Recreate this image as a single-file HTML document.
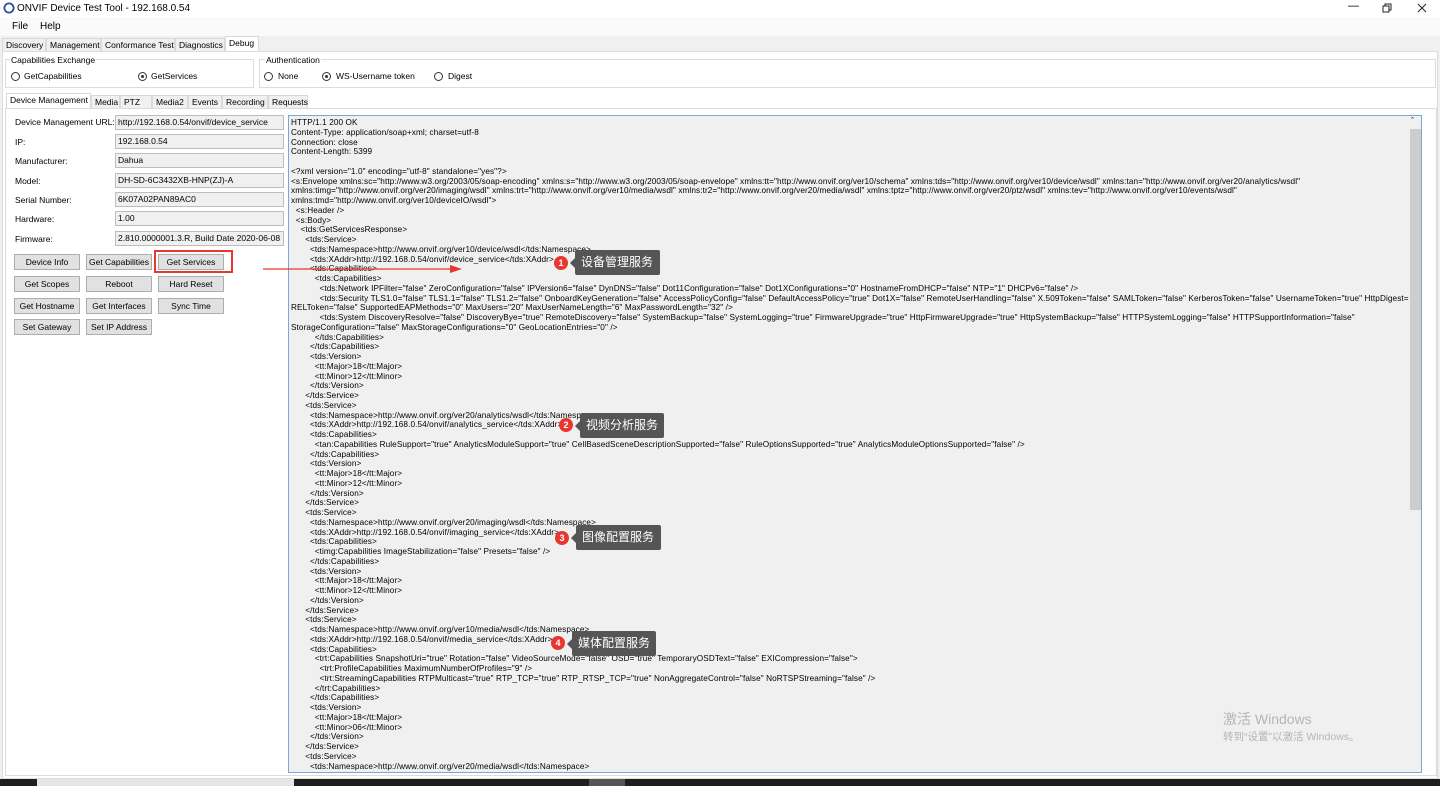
<!DOCTYPE html>
<html><head><meta charset="utf-8"><style>
*{margin:0;padding:0;box-sizing:border-box}
body{width:1440px;height:786px;overflow:hidden;background:#f0f0f0;font-family:"Liberation Sans","Noto Sans CJK SC",sans-serif;font-size:9px;color:#000;position:relative}
.a{position:absolute}
.title{left:0;top:0;width:1440px;height:17px;background:#fff}
.menu{left:0;top:17px;width:1440px;height:19px;background:#fafafa}
.tab{position:absolute;top:38px;height:13px;border:1px solid #d9d9d9;border-bottom:none;background:#f0f0f0;font-size:8.5px;line-height:12px;padding-left:3px;white-space:nowrap}
.grp{position:absolute;border:1px solid #dcdcdc;background:#fff}
.lbl{position:absolute;font-size:8.5px;white-space:nowrap}
.radio{position:absolute;width:9px;height:9px;border:1px solid #333;border-radius:50%;background:#fff}
.radio.on::after{content:"";position:absolute;left:2px;top:2px;width:3px;height:3px;border-radius:50%;background:#333}
.fld{position:absolute;left:115px;width:169px;height:15px;border:1px solid #bdbdbd;background:#f0f0f0;font-size:8.5px;line-height:13px;padding-left:2px;white-space:nowrap;overflow:hidden}
.btn{position:absolute;width:66px;height:16px;border:1px solid #adadad;background:#e1e1e1;font-size:8.5px;line-height:14px;text-align:center;white-space:nowrap}
#txt{left:288px;top:115px;width:1134px;height:658px;border:1px solid #7aa7d8;background:#f0f0f0;overflow:hidden;padding-top:2px}
#txt div{height:9.75px;line-height:9.75px;font-size:8.2px;white-space:pre;letter-spacing:0.1px;padding-left:2px}
.co{position:absolute;height:25px;background:#555;color:#fff;font-size:12px;line-height:25px;padding-left:6px;border-radius:2px}
.co::before{content:"";position:absolute;left:-5px;top:8px;border-right:5px solid #555;border-top:5px solid transparent;border-bottom:5px solid transparent}
.num{position:absolute;width:14px;height:14px;border-radius:50%;background:#e8372f;color:#fff;font-size:9px;line-height:14px;text-align:center;font-weight:bold}
</style></head><body>
<div class="a title"></div>
<svg class="a" style="left:3px;top:2px" width="12" height="12"><circle cx="6" cy="6" r="4.6" fill="none" stroke="#2b4d9c" stroke-width="1.8"/></svg>
<div class="lbl" style="left:17px;top:3px;font-size:10px">ONVIF Device Test Tool - 192.168.0.54</div>
<div class="lbl" style="left:1348px;top:0px;font-size:11px">—</div>
<svg class="a" style="left:1382px;top:3px" width="10" height="10"><rect x="1" y="3" width="6" height="6" fill="none" stroke="#222"/><path d="M3 3V1h6v6H7" fill="none" stroke="#222"/></svg>
<svg class="a" style="left:1417px;top:3px" width="10" height="10"><path d="M1 1L9 9M9 1L1 9" stroke="#222"/></svg>
<div class="a menu"></div>
<div class="lbl" style="left:12px;top:21px;font-size:10px">File</div>
<div class="lbl" style="left:40px;top:21px;font-size:10px">Help</div>

<div class="tab" style="left:2px;width:44px">Discovery</div>
<div class="tab" style="left:46px;width:55px">Management</div>
<div class="tab" style="left:101px;width:74px">Conformance Test</div>
<div class="tab" style="left:175px;width:50px">Diagnostics</div>
<div class="tab" style="left:225px;width:34px;top:36px;height:15px;background:#fff">Debug</div>
<div class="a" style="left:2px;top:51px;width:1436px;height:728px;background:#fff;border:1px solid #dcdcdc"></div>

<div class="grp" style="left:5px;top:59px;width:249px;height:29px"></div>
<div class="lbl" style="left:10px;top:55px;background:#fff;padding:0 1px">Capabilities Exchange</div>
<div class="radio" style="left:11px;top:72px"></div><div class="lbl" style="left:24px;top:71px">GetCapabilities</div>
<div class="radio on" style="left:138px;top:72px"></div><div class="lbl" style="left:151px;top:71px">GetServices</div>
<div class="grp" style="left:259px;top:59px;width:1177px;height:29px"></div>
<div class="lbl" style="left:265px;top:55px;background:#fff;padding:0 1px">Authentication</div>
<div class="radio" style="left:264px;top:72px"></div><div class="lbl" style="left:278px;top:71px">None</div>
<div class="radio on" style="left:322px;top:72px"></div><div class="lbl" style="left:336px;top:71px">WS-Username token</div>
<div class="radio" style="left:434px;top:72px"></div><div class="lbl" style="left:448px;top:71px">Digest</div>

<div class="tab" style="left:6px;top:93px;width:85px;height:16px;background:#fff">Device Management</div>
<div class="tab" style="left:91px;top:95px;width:29px">Media</div>
<div class="tab" style="left:120px;top:95px;width:32px">PTZ</div>
<div class="tab" style="left:152px;top:95px;width:36px">Media2</div>
<div class="tab" style="left:188px;top:95px;width:34px">Events</div>
<div class="tab" style="left:222px;top:95px;width:46px">Recording</div>
<div class="tab" style="left:268px;top:95px;width:40px">Requests</div>
<div class="a" style="left:5px;top:108px;width:1432px;height:668px;border:1px solid #dcdcdc;background:#fff"></div>

<div class="lbl" style="left:15px;top:117px">Device Management URL:</div><div class="fld" style="top:115px">http://192.168.0.54/onvif/device_service</div>
<div class="lbl" style="left:15px;top:137px">IP:</div><div class="fld" style="top:134px">192.168.0.54</div>
<div class="lbl" style="left:15px;top:156px">Manufacturer:</div><div class="fld" style="top:153px">Dahua</div>
<div class="lbl" style="left:15px;top:176px">Model:</div><div class="fld" style="top:173px">DH-SD-6C3432XB-HNP(ZJ)-A</div>
<div class="lbl" style="left:15px;top:195px">Serial Number:</div><div class="fld" style="top:192px">6K07A02PAN89AC0</div>
<div class="lbl" style="left:15px;top:214px">Hardware:</div><div class="fld" style="top:211px">1.00</div>
<div class="lbl" style="left:15px;top:234px">Firmware:</div><div class="fld" style="top:231px">2.810.0000001.3.R, Build Date 2020-06-08</div>

<div class="btn" style="left:14px;top:254px">Device Info</div>
<div class="btn" style="left:86px;top:254px">Get Capabilities</div>
<div class="btn" style="left:158px;top:254px">Get Services</div>
<div class="btn" style="left:14px;top:276px">Get Scopes</div>
<div class="btn" style="left:86px;top:276px">Reboot</div>
<div class="btn" style="left:158px;top:276px">Hard Reset</div>
<div class="btn" style="left:14px;top:298px">Get Hostname</div>
<div class="btn" style="left:86px;top:298px">Get Interfaces</div>
<div class="btn" style="left:158px;top:298px">Sync Time</div>
<div class="btn" style="left:14px;top:319px">Set Gateway</div>
<div class="btn" style="left:86px;top:319px">Set IP Address</div>
<div class="a" style="left:154px;top:250px;width:79px;height:23px;border:2px solid #e8372f"></div>

<div id="txt" class="a">
<div>HTTP/1.1 200 OK</div>
<div>Content-Type: application/soap+xml; charset=utf-8</div>
<div>Connection: close</div>
<div>Content-Length: 5399</div>
<div> </div>
<div>&lt;?xml version="1.0" encoding="utf-8" standalone="yes"?&gt;</div>
<div>&lt;s:Envelope xmlns:sc="http://www.w3.org/2003/05/soap-encoding" xmlns:s="http://www.w3.org/2003/05/soap-envelope" xmlns:tt="http://www.onvif.org/ver10/schema" xmlns:tds="http://www.onvif.org/ver10/device/wsdl" xmlns:tan="http://www.onvif.org/ver20/analytics/wsdl"</div>
<div>xmlns:timg="http://www.onvif.org/ver20/imaging/wsdl" xmlns:trt="http://www.onvif.org/ver10/media/wsdl" xmlns:tr2="http://www.onvif.org/ver20/media/wsdl" xmlns:tptz="http://www.onvif.org/ver20/ptz/wsdl" xmlns:tev="http://www.onvif.org/ver10/events/wsdl"</div>
<div>xmlns:tmd="http://www.onvif.org/ver10/deviceIO/wsdl"&gt;</div>
<div>  &lt;s:Header /&gt;</div>
<div>  &lt;s:Body&gt;</div>
<div>    &lt;tds:GetServicesResponse&gt;</div>
<div>      &lt;tds:Service&gt;</div>
<div>        &lt;tds:Namespace&gt;http://www.onvif.org/ver10/device/wsdl&lt;/tds:Namespace&gt;</div>
<div>        &lt;tds:XAddr&gt;http://192.168.0.54/onvif/device_service&lt;/tds:XAddr&gt;</div>
<div>        &lt;tds:Capabilities&gt;</div>
<div>          &lt;tds:Capabilities&gt;</div>
<div>            &lt;tds:Network IPFilter="false" ZeroConfiguration="false" IPVersion6="false" DynDNS="false" Dot11Configuration="false" Dot1XConfigurations="0" HostnameFromDHCP="false" NTP="1" DHCPv6="false" /&gt;</div>
<div>            &lt;tds:Security TLS1.0="false" TLS1.1="false" TLS1.2="false" OnboardKeyGeneration="false" AccessPolicyConfig="false" DefaultAccessPolicy="true" Dot1X="false" RemoteUserHandling="false" X.509Token="false" SAMLToken="false" KerberosToken="false" UsernameToken="true" HttpDigest="true"</div>
<div>RELToken="false" SupportedEAPMethods="0" MaxUsers="20" MaxUserNameLength="6" MaxPasswordLength="32" /&gt;</div>
<div>            &lt;tds:System DiscoveryResolve="false" DiscoveryBye="true" RemoteDiscovery="false" SystemBackup="false" SystemLogging="true" FirmwareUpgrade="true" HttpFirmwareUpgrade="true" HttpSystemBackup="false" HTTPSystemLogging="false" HTTPSupportInformation="false"</div>
<div>StorageConfiguration="false" MaxStorageConfigurations="0" GeoLocationEntries="0" /&gt;</div>
<div>          &lt;/tds:Capabilities&gt;</div>
<div>        &lt;/tds:Capabilities&gt;</div>
<div>        &lt;tds:Version&gt;</div>
<div>          &lt;tt:Major&gt;18&lt;/tt:Major&gt;</div>
<div>          &lt;tt:Minor&gt;12&lt;/tt:Minor&gt;</div>
<div>        &lt;/tds:Version&gt;</div>
<div>      &lt;/tds:Service&gt;</div>
<div>      &lt;tds:Service&gt;</div>
<div>        &lt;tds:Namespace&gt;http://www.onvif.org/ver20/analytics/wsdl&lt;/tds:Namespace&gt;</div>
<div>        &lt;tds:XAddr&gt;http://192.168.0.54/onvif/analytics_service&lt;/tds:XAddr&gt;</div>
<div>        &lt;tds:Capabilities&gt;</div>
<div>          &lt;tan:Capabilities RuleSupport="true" AnalyticsModuleSupport="true" CellBasedSceneDescriptionSupported="false" RuleOptionsSupported="true" AnalyticsModuleOptionsSupported="false" /&gt;</div>
<div>        &lt;/tds:Capabilities&gt;</div>
<div>        &lt;tds:Version&gt;</div>
<div>          &lt;tt:Major&gt;18&lt;/tt:Major&gt;</div>
<div>          &lt;tt:Minor&gt;12&lt;/tt:Minor&gt;</div>
<div>        &lt;/tds:Version&gt;</div>
<div>      &lt;/tds:Service&gt;</div>
<div>      &lt;tds:Service&gt;</div>
<div>        &lt;tds:Namespace&gt;http://www.onvif.org/ver20/imaging/wsdl&lt;/tds:Namespace&gt;</div>
<div>        &lt;tds:XAddr&gt;http://192.168.0.54/onvif/imaging_service&lt;/tds:XAddr&gt;</div>
<div>        &lt;tds:Capabilities&gt;</div>
<div>          &lt;timg:Capabilities ImageStabilization="false" Presets="false" /&gt;</div>
<div>        &lt;/tds:Capabilities&gt;</div>
<div>        &lt;tds:Version&gt;</div>
<div>          &lt;tt:Major&gt;18&lt;/tt:Major&gt;</div>
<div>          &lt;tt:Minor&gt;12&lt;/tt:Minor&gt;</div>
<div>        &lt;/tds:Version&gt;</div>
<div>      &lt;/tds:Service&gt;</div>
<div>      &lt;tds:Service&gt;</div>
<div>        &lt;tds:Namespace&gt;http://www.onvif.org/ver10/media/wsdl&lt;/tds:Namespace&gt;</div>
<div>        &lt;tds:XAddr&gt;http://192.168.0.54/onvif/media_service&lt;/tds:XAddr&gt;</div>
<div>        &lt;tds:Capabilities&gt;</div>
<div>          &lt;trt:Capabilities SnapshotUri="true" Rotation="false" VideoSourceMode="false" OSD="true" TemporaryOSDText="false" EXICompression="false"&gt;</div>
<div>            &lt;trt:ProfileCapabilities MaximumNumberOfProfiles="9" /&gt;</div>
<div>            &lt;trt:StreamingCapabilities RTPMulticast="true" RTP_TCP="true" RTP_RTSP_TCP="true" NonAggregateControl="false" NoRTSPStreaming="false" /&gt;</div>
<div>          &lt;/trt:Capabilities&gt;</div>
<div>        &lt;/tds:Capabilities&gt;</div>
<div>        &lt;tds:Version&gt;</div>
<div>          &lt;tt:Major&gt;18&lt;/tt:Major&gt;</div>
<div>          &lt;tt:Minor&gt;06&lt;/tt:Minor&gt;</div>
<div>        &lt;/tds:Version&gt;</div>
<div>      &lt;/tds:Service&gt;</div>
<div>      &lt;tds:Service&gt;</div>
<div>        &lt;tds:Namespace&gt;http://www.onvif.org/ver20/media/wsdl&lt;/tds:Namespace&gt;</div>
</div>
<div class="a" style="left:1409px;top:116px;width:12px;height:656px;background:#f0f0f0"></div>
<div class="lbl" style="left:1411px;top:116px;font-size:9px">&#710;</div>
<div class="a" style="left:1410px;top:129px;width:11px;height:381px;background:#cdcdcd"></div>

<svg class="a" style="left:262px;top:263px" width="202" height="12"><path d="M1 6H190" stroke="#e8372f" stroke-width="1.2"/><path d="M188 2L200 6L188 10Z" fill="#e8372f"/></svg>

<div class="num" style="left:554px;top:256px">1</div><div class="co" style="left:575px;top:250px;width:85px">设备管理服务</div>
<div class="num" style="left:559px;top:418px">2</div><div class="co" style="left:580px;top:413px;width:84px">视频分析服务</div>
<div class="num" style="left:555px;top:531px">3</div><div class="co" style="left:576px;top:525px;width:85px">图像配置服务</div>
<div class="num" style="left:551px;top:636px">4</div><div class="co" style="left:572px;top:631px;width:84px">媒体配置服务</div>

<div class="lbl" style="left:1223px;top:709px;font-size:14px;color:#b5b5b5">激活 Windows</div>
<div class="lbl" style="left:1223px;top:729px;font-size:10.5px;color:#b5b5b5">转到“设置”以激活 Windows。</div>

<div class="a" style="left:0;top:779px;width:1440px;height:7px;background:#1f1f1f"></div>
<div class="a" style="left:37px;top:779px;width:257px;height:7px;background:#e6e6e6"></div>
<div class="a" style="left:589px;top:779px;width:36px;height:7px;background:#555"></div>
</body></html>
